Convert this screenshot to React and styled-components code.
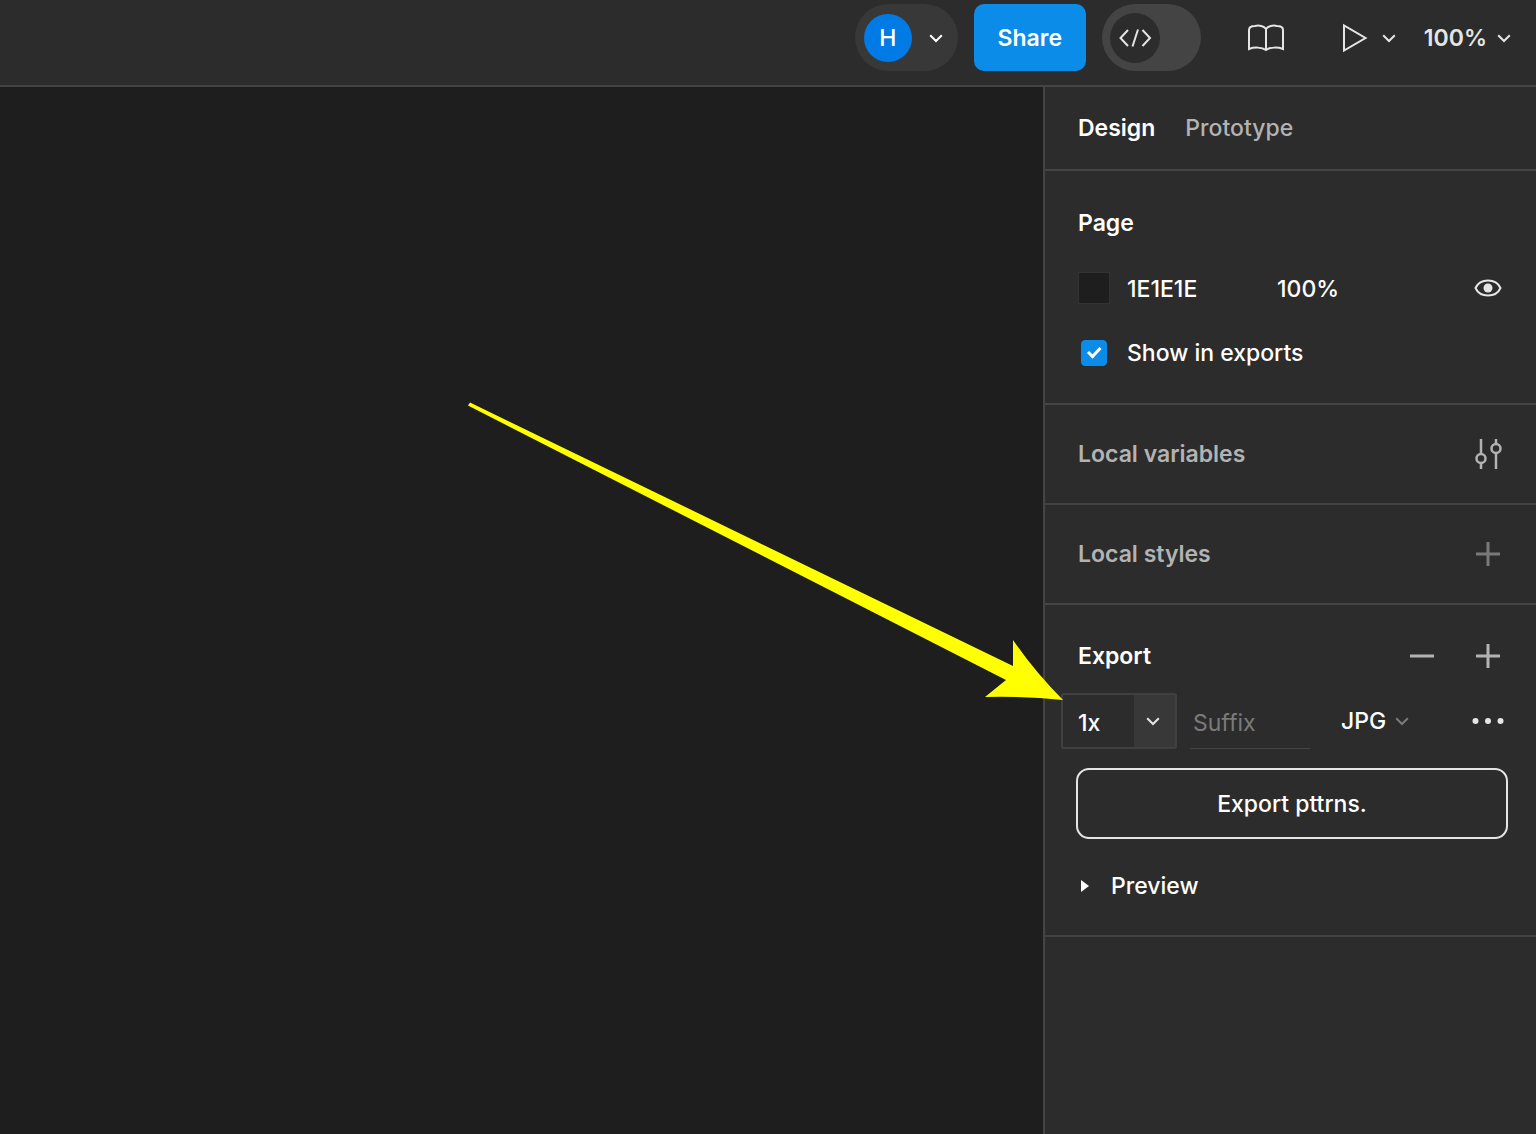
import { useState } from "react"
import styled, { createGlobalStyle, ThemeProvider } from "styled-components"

const theme = {
    colors: {
        canvas: '#1e1e1e',
        panel: '#2c2c2c',
        raised: '#383838',
        line: '#444444',
        text: '#ffffff',
        icon: '#e5e5e5',
        hint: '#b3b3b3',
        faint: '#7a7a7a',
        accent: '#0c8ce9',
        avatar: '#007be5',
        arrow: '#ffff00',
    },
}

const GlobalStyle = createGlobalStyle`
    * { box-sizing: border-box; }

    body {
        margin: 0;
        background: ${ ( { theme } ) => theme.colors.canvas };
    }

    body, button, input, select {
        font-family: Inter, "Liberation Sans", sans-serif;
        font-size: 23px;
        line-height: 28px;
        font-weight: 500;
        color: ${ ( { theme } ) => theme.colors.text };
    }
`

// ─── Page frame ────────────────────────────────────────────────

const Page = styled.div`
    display: flex;
    flex-direction: column;
    min-height: 100vh;
`

const Workspace = styled.div`
    position: relative;
    flex: 1;
    display: flex;
`

const Canvas = styled.main`
    flex: 1;
`

const Sidebar = styled.aside`
    width: 493px;
    background: ${ ( { theme } ) => theme.colors.panel };
    border-left: 2px solid ${ ( { theme } ) => theme.colors.line };
`

const PointerArrow = styled.svg`
    position: absolute;
    top: 313px;
    right: 472px;
    pointer-events: none;
    fill: ${ ( { theme } ) => theme.colors.arrow };
`

// ─── Top bar ───────────────────────────────────────────────────

const TopBar = styled.header`
    display: flex;
    align-items: center;
    justify-content: flex-end;
    gap: 16px;
    padding: 4px 25px 14px;
    background: ${ ( { theme } ) => theme.colors.panel };
    border-bottom: 2px solid ${ ( { theme } ) => theme.colors.line };
`

const BareButton = styled.button`
    display: flex;
    align-items: center;
    justify-content: center;
    padding: 0;
    border: none;
    background: none;
    cursor: pointer;
`

const AccountButton = styled( BareButton )`
    justify-content: flex-start;
    gap: 17px;
    width: 103px;
    height: 67px;
    padding-left: 9px;
    border-radius: 34px;
    background: ${ ( { theme } ) => theme.colors.raised };
`

const Avatar = styled.span`
    width: 48px;
    height: 48px;
    border-radius: 50%;
    line-height: 48px;
    background: ${ ( { theme } ) => theme.colors.avatar };
`

const ShareButton = styled( BareButton )`
    width: 112px;
    height: 67px;
    border-radius: 10px;
    font-weight: 600;
    background: ${ ( { theme } ) => theme.colors.accent };
`

const DevToggle = styled( BareButton )`
    justify-content: flex-start;
    width: 99px;
    height: 67px;
    padding: 0 8px;
    border-radius: 34px;
    background: ${ ( { theme } ) => theme.colors.line };
`

const Knob = styled.span`
    display: grid;
    place-items: center;
    width: 50px;
    height: 50px;
    border-radius: 50%;
    color: ${ ( { theme } ) => theme.colors.icon };
    background: ${ ( { theme } ) => theme.colors.panel };
`

const Tools = styled.div`
    display: flex;
    align-items: center;
    gap: 28px;
    padding-left: 28px;
`

const ToolButton = styled( BareButton )`
    gap: ${ ( { $gap = 0 } ) => $gap }px;
    min-width: 42px;
    height: 48px;
    font-weight: 600;
    color: ${ ( { theme } ) => theme.colors.icon };

    &:first-child { margin-right: 27px; }
`

// ─── Sidebar sections ──────────────────────────────────────────

const Tabs = styled.nav`
    display: flex;
    align-items: center;
    gap: 30px;
    height: 84px;
    padding: 0 28px 0 33px;
    border-bottom: 2px solid ${ ( { theme } ) => theme.colors.line };
`

const Tab = styled( BareButton )`
    font-weight: ${ ( { $active } ) => $active ? 600 : 500 };
    color: ${ ( { theme, $active } ) => $active ? theme.colors.text : theme.colors.hint };
`

const section_padding = {
    compact: '16px 0 17px',
    normal: '18px 0 17px',
    roomy: '19px 0 18px',
}

const Section = styled.section`
    padding: ${ ( { $density = 'normal' } ) => section_padding[ $density ] };
    border-bottom: 2px solid ${ ( { theme } ) => theme.colors.line };
`

const Row = styled.div`
    display: flex;
    align-items: center;
    height: 65px;
    padding: 0 28px 0 31px;
`

const Heading = styled.h2`
    flex: 1;
    margin: 0 0 0 2px;
    font-size: 23px;
    font-weight: 600;
    color: ${ ( { theme, $muted } ) => $muted ? theme.colors.hint : theme.colors.text };
`

const IconButton = styled( BareButton )`
    width: 40px;
    height: 40px;
    color: ${ ( { theme, $tone = 'icon' } ) => theme.colors[ $tone ] };
`

const IconGroup = styled.div`
    display: flex;
    gap: 26px;
`

const Lead = styled.span`
    display: grid;
    place-items: center;
    width: 36px;
    margin-right: 15px;

    > * { grid-area: 1 / 1; }
    > svg { pointer-events: none; }
`

const Swatch = styled.button`
    width: 32px;
    height: 32px;
    border: 1px solid #333333;
    background: ${ ( { theme } ) => theme.colors.canvas };
`

const ValueInput = styled.input`
    width: 150px;
    padding: 2px 0 0;
    border: none;
    outline: none;
    background: none;
`

const Spacer = styled.span`
    flex: 1;
`

const Checkbox = styled.input`
    appearance: none;
    width: 26px;
    height: 26px;
    margin: 0;
    border: 1px solid ${ ( { theme } ) => theme.colors.accent };
    border-radius: 4px;

    &:checked { background: ${ ( { theme } ) => theme.colors.accent }; }
    &:not( :checked ) + svg { display: none; }
`

// ─── Export settings ───────────────────────────────────────────

const ExportRow = styled.div`
    display: flex;
    align-items: center;
    height: 56px;
    margin: 5px 0 19px;
    padding: 0 28px 0 16px;
`

const ScaleField = styled.div`
    display: flex;
    width: 116px;
    height: 56px;
    border: 2px solid #404040;
    border-radius: 3px;
`

const ScaleInput = styled( ValueInput )`
    flex: 1;
    min-width: 0;
    padding: 4px 0 0 15px;
`

const ScaleButton = styled( BareButton )`
    width: 41px;
    padding-right: 4px;
    color: ${ ( { theme } ) => theme.colors.icon };
    background: ${ ( { theme } ) => theme.colors.raised };
`

const SuffixInput = styled( ValueInput )`
    width: 120px;
    height: 56px;
    margin: 0 31px 0 13px;
    padding: 4px 0 0 3px;
    border-bottom: 1px solid ${ ( { theme } ) => theme.colors.line };
    font-weight: 400;

    &::placeholder {
        color: ${ ( { theme } ) => theme.colors.faint };
        opacity: 1;
    }
`

const FormatField = styled.div`
    display: grid;
    align-items: center;
    width: 68px;
    color: ${ ( { theme } ) => theme.colors.faint };

    > * { grid-area: 1 / 1; }
    > svg { justify-self: end; pointer-events: none; }
`

const FormatSelect = styled.select`
    appearance: none;
    padding: 0;
    border: none;
    outline: none;
    background: none;
`

const ExportButton = styled( BareButton )`
    height: 71px;
    width: calc( 100% - 59px );
    margin: 0 28px 14px 31px;
    border: 2px solid ${ ( { theme } ) => theme.colors.icon };
    border-radius: 13px;
`

const PreviewButton = styled( BareButton )`
    gap: 21px;
    padding-left: 4px;
`

// ─── Icons ─────────────────────────────────────────────────────

const Glyph = ( { w, h, children, ...rest } ) => <svg width={ w } height={ h } viewBox={ `0 0 ${ w } ${ h }` } fill="none" stroke="currentColor" strokeWidth="2" aria-hidden="true" { ...rest }>
    { children }
</svg>

const Chevron = () => <Glyph w={ 14 } h={ 10 }><path d="M1.200 2.200L7 8l5.800-5.800" /></Glyph>

const CodeIcon = () => <Glyph w={ 34 } h={ 20 }>
    <path d="M10 2L2.500 10l7.500 8M24.500 2l7.500 8-7.500 8M20 1.500l-5.500 17" />
</Glyph>

const BookIcon = () => <Glyph w={ 38 } h={ 30 }>
    <path d="M19 6C17 3 12 2 8 3 4 3 2 4 2 7v19c5-2 13-2 17 1 4-3 12-3 17-1V7c0-3-2-4-6-4-4-1-9 0-11 3zM19 6v21" />
</Glyph>

const PlayIcon = () => <Glyph w={ 26 } h={ 30 }><path d="M2 2.500v25L23.500 15z" /></Glyph>

const EyeIcon = () => <Glyph w={ 28 } h={ 20 }>
    <path d="M1.500 10C4 4.500 8.500 2.500 14 2.500s10 2 12.500 7.500C24 15.500 19.500 17.500 14 17.500S4 15.500 1.500 10z" />
    <circle cx="14" cy="10" r="4.500" fill="currentColor" stroke="none" />
</Glyph>

const CheckIcon = () => <Glyph w={ 16 } h={ 14 } strokeWidth="3"><path d="M2 6l4.500 4.500L14.500 2" /></Glyph>

const VariablesIcon = () => <Glyph w={ 28 } h={ 32 } strokeWidth="2.500">
    <path d="M7 1v15M7 25v6M22 1v5M22 15v16" />
    <circle cx="7" cy="20.500" r="4.500" />
    <circle cx="22" cy="10.500" r="4.500" />
</Glyph>

const PlusIcon = () => <Glyph w={ 24 } h={ 24 } strokeWidth="3"><path d="M0 12h24M12 0v24" /></Glyph>

const MinusIcon = () => <Glyph w={ 24 } h={ 24 } strokeWidth="3"><path d="M0 12h24" /></Glyph>

const MoreIcon = () => <Glyph w={ 32 } h={ 8 } fill="currentColor" stroke="none">
    <circle cx="3.500" cy="4" r="3" />
    <circle cx="16" cy="4" r="3" />
    <circle cx="28.500" cy="4" r="3" />
</Glyph>

const TriangleIcon = () => <Glyph w={ 10 } h={ 12 } fill="currentColor" stroke="none"><path d="M1 0v12l8-6z" /></Glyph>

// ─── Component ─────────────────────────────────────────────────

export default function App() {

    const [ show_in_exports, set_show_in_exports ] = useState( true )
    const [ tab, set_tab ] = useState( 'Design' )

    return <ThemeProvider theme={ theme }>

        <GlobalStyle />

        <Page>

            <TopBar>
                <AccountButton aria-label="Account">
                    <Avatar>H</Avatar>
                    <Chevron />
                </AccountButton>
                <ShareButton>Share</ShareButton>
                <DevToggle aria-label="Dev mode">
                    <Knob><CodeIcon /></Knob>
                </DevToggle>
                <Tools>
                    <ToolButton aria-label="Libraries"><BookIcon /></ToolButton>
                    <ToolButton $gap={ 14 } aria-label="Present">
                        <PlayIcon />
                        <Chevron />
                    </ToolButton>
                    <ToolButton $gap={ 10 }>
                        100%
                        <Chevron />
                    </ToolButton>
                </Tools>
            </TopBar>

            <Workspace>

                <Canvas />

                <Sidebar>

                    <Tabs>
                        { [ 'Design', 'Prototype' ].map( name => <Tab key={ name } $active={ tab === name } onClick={ () => set_tab( name ) }>{ name }</Tab> ) }
                    </Tabs>

                    <Section $density="roomy">
                        <Row><Heading>Page</Heading></Row>
                        <Row>
                            <Lead><Swatch aria-label="Page colour" /></Lead>
                            <ValueInput aria-label="Hex" defaultValue="1E1E1E" />
                            <ValueInput aria-label="Opacity" defaultValue="100%" />
                            <Spacer />
                            <IconButton aria-label="Toggle visibility"><EyeIcon /></IconButton>
                        </Row>
                        <Row>
                            <Lead>
                                <Checkbox id="show-in-exports" type="checkbox" checked={ show_in_exports } onChange={ e => set_show_in_exports( e.target.checked ) } />
                                <CheckIcon />
                            </Lead>
                            <label htmlFor="show-in-exports">Show in exports</label>
                        </Row>
                    </Section>

                    <Section $density="compact">
                        <Row>
                            <Heading $muted>Local variables</Heading>
                            <IconButton $tone="hint" aria-label="Open variables"><VariablesIcon /></IconButton>
                        </Row>
                    </Section>

                    <Section $density="compact">
                        <Row>
                            <Heading $muted>Local styles</Heading>
                            <IconButton $tone="faint" aria-label="Add style"><PlusIcon /></IconButton>
                        </Row>
                    </Section>

                    <Section>
                        <Row>
                            <Heading>Export</Heading>
                            <IconGroup>
                                <IconButton $tone="hint" aria-label="Remove export"><MinusIcon /></IconButton>
                                <IconButton $tone="hint" aria-label="Add export"><PlusIcon /></IconButton>
                            </IconGroup>
                        </Row>
                        <ExportRow>
                            <ScaleField>
                                <ScaleInput aria-label="Scale" defaultValue="1x" />
                                <ScaleButton aria-label="Choose scale"><Chevron /></ScaleButton>
                            </ScaleField>
                            <SuffixInput aria-label="Suffix" placeholder="Suffix" />
                            <FormatField>
                                <FormatSelect aria-label="Format" defaultValue="JPG">
                                    <option>PNG</option>
                                    <option>JPG</option>
                                    <option>SVG</option>
                                    <option>PDF</option>
                                </FormatSelect>
                                <Chevron />
                            </FormatField>
                            <Spacer />
                            <IconButton aria-label="More options"><MoreIcon /></IconButton>
                        </ExportRow>
                        <ExportButton>Export pttrns.</ExportButton>
                        <Row>
                            <PreviewButton>
                                <TriangleIcon />
                                Preview
                            </PreviewButton>
                        </Row>
                    </Section>

                </Sidebar>

                <PointerArrow width="598" height="302" viewBox="466 400 598 302" aria-hidden="true">
                    <path d="M470 402.500L1013 666V640Q1035 672 1063 700Q1025 696 985 697L1006 680L468 405.500z" />
                </PointerArrow>

            </Workspace>

        </Page>

    </ThemeProvider>

}
